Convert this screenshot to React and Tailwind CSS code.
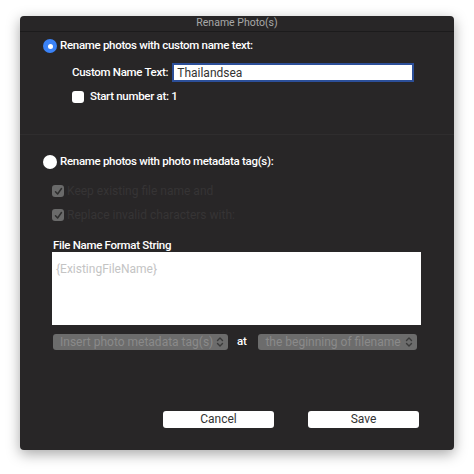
import React from "react";

const font = { fontFamily: 'Roboto, "Liberation Sans", Arial, sans-serif' };

function Chevrons() {
  return (
    <svg width="8" height="12" viewBox="0 0 8 12" fill="none" stroke="#3a3a3a" strokeWidth="1.4" strokeLinecap="round" strokeLinejoin="round">
      <path d="M1.5 4.5 L4 2 L6.5 4.5" />
      <path d="M1.5 7.5 L4 10 L6.5 7.5" />
    </svg>
  );
}

function DisabledCheck({ label }) {
  return (
    <div className="flex items-center gap-[3px] h-[14px]">
      <div className="w-[12px] h-[12px] rounded-[3px] bg-[#6a6a6a] flex items-center justify-center">
        <svg width="9" height="9" viewBox="0 0 9 9" fill="none" stroke="#2e2e2e" strokeWidth="1.5" strokeLinecap="round" strokeLinejoin="round">
          <path d="M1.5 4.8 L3.6 7 L7.5 1.5" />
        </svg>
      </div>
      <span className="text-[12px] text-[#363435] leading-none">{label}</span>
    </div>
  );
}

function Select({ label, width }) {
  return (
    <div className={`${width} h-[16px] rounded-[3px] bg-[#6c6c6c] flex items-center justify-between pl-[7px] pr-[4px]`}>
      <span className="text-[12px] text-[#8a8a8a] leading-none">{label}</span>
      <Chevrons />
    </div>
  );
}

const label = "text-[11.5px] font-medium text-white leading-none tracking-[-0.3px]";

export default function App() {
  return (
    <div className="w-[474px] h-[474px] bg-white pt-[16px] pl-[20px]" style={font}>
      <div className="w-[434px] h-[434px] bg-[#282627] rounded-[4px] shadow-[0_4px_14px_rgba(0,0,0,0.35)] flex flex-col">
        {/* title bar */}
        <div className="h-[16px] border-b border-[#1c1b1c] flex items-center justify-center">
          <span className="text-[10.5px] text-[#a8a8a8] leading-none">Rename Photo(s)</span>
        </div>

        {/* section 1 */}
        <div className="pl-[23px] pt-[7px] h-[103px] border-b border-[#2f2d2e]">
          <div className="flex items-center gap-[3px]">
            <div className="w-[14px] h-[14px] rounded-full bg-[#3a82f7] flex items-center justify-center">
              <div className="w-[5px] h-[5px] rounded-full bg-white" />
            </div>
            <span className={label}>Rename photos with custom name text:</span>
          </div>
          <div className="flex items-center gap-[4px] pl-[29px] mt-[10px]">
            <span className={label}>Custom Name Text:</span>
            <div className="w-[242px] h-[19px] bg-white border-2 border-[#2c4f99] flex items-center pl-[3px]">
              <span className="text-[12px] text-[#333] leading-none">Thailandsea</span>
            </div>
          </div>
          <div className="flex items-center gap-[6px] pl-[29px] mt-[9px]">
            <div className="w-[12px] h-[12px] rounded-[3px] bg-white" />
            <span className={label}>Start number at: 1</span>
          </div>
        </div>

        {/* section 2 */}
        <div className="pl-[23px] pt-[20px]">
          <div className="flex items-center gap-[3px]">
            <div className="w-[14px] h-[14px] rounded-full bg-white" />
            <span className={label}>Rename photos with photo metadata tag(s):</span>
          </div>
          <div className="pl-[9px] mt-[15px] flex flex-col gap-[10px]">
            <DisabledCheck label="Keep existing file name and" />
            <DisabledCheck label="Replace invalid characters with:" />
          </div>
          <div className="pl-[10px] mt-[18px]">
            <div className={label}>File Name Format String</div>
            <div className="w-[369px] h-[73px] bg-white pl-[4px] pt-[4px] -ml-[1px]">
              <span className="text-[12px] text-[#c4c4c4] leading-none">{"{ExistingFileName}"}</span>
            </div>
            <div className="flex items-center mt-[9px]">
              <Select label="Insert photo metadata tag(s)" width="w-[175px]" />
              <span className={`${label} ml-[9px] mr-[12px]`}>at</span>
              <Select label="the beginning of filename" width="w-[159px]" />
            </div>
          </div>
        </div>

        {/* buttons */}
        <div className="flex justify-end gap-[34px] pr-[35px] mt-[61px]">
          <button className="w-[111px] h-[17px] bg-white rounded-[3px] text-[12px] text-[#333] leading-none">Cancel</button>
          <button className="w-[111px] h-[17px] bg-white rounded-[3px] text-[12px] text-[#333] leading-none">Save</button>
        </div>
      </div>
    </div>
  );
}
